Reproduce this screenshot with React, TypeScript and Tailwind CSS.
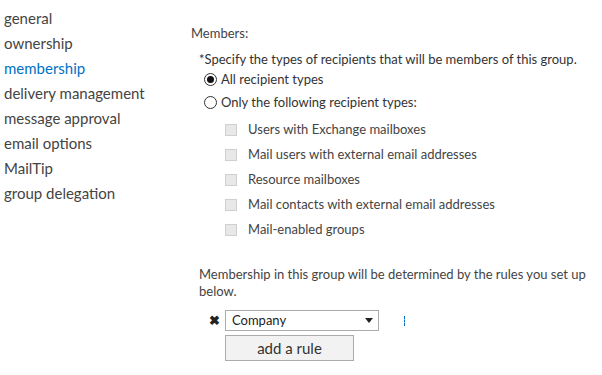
import React from 'react';

const navItems = [
  'general',
  'ownership',
  'membership',
  'delivery management',
  'message approval',
  'email options',
  'MailTip',
  'group delegation',
];

const recipientTypes = [
  'Users with Exchange mailboxes',
  'Mail users with external email addresses',
  'Resource mailboxes',
  'Mail contacts with external email addresses',
  'Mail-enabled groups',
];

const Radio = ({ checked }: { checked?: boolean }) => (
  <span className="w-[13px] h-[13px] rounded-full border border-[#333] bg-white flex items-center justify-center shrink-0">
    {checked && <span className="w-[7px] h-[7px] rounded-full bg-[#111]"></span>}
  </span>
);

export default function App() {
  return (
    <div className="w-[602px] h-[375px] bg-white overflow-hidden flex text-[#333]" style={{ fontFamily: 'Lato, "Open Sans", sans-serif' }}>
      <nav className="w-[191px] shrink-0 pl-[4px] pt-[6px] flex flex-col">
        {navItems.map(item => (
          <div
            key={item}
            className={`h-[25px] leading-[25px] text-[15px] ${item === 'membership' ? 'text-[#0072c6]' : 'text-[#444]'}`}
          >
            {item}
          </div>
        ))}
      </nav>

      <main className="flex-1 pt-[25px] pr-[6px] text-[13px]">
        <div className="text-[#444] leading-[17px]">Members:</div>

        <div className="pl-[8px] mt-[9px]">
          <div className="leading-[17px] text-[#333] whitespace-nowrap">*Specify the types of recipients that will be members of this group.</div>
          <div className="pl-[5px] flex flex-col">
            <label className="h-[23px] flex items-center gap-[4px]">
              <Radio checked />
              <span>All recipient types</span>
            </label>
            <label className="h-[23px] flex items-center gap-[4px]">
              <Radio />
              <span>Only the following recipient types:</span>
            </label>
          </div>

          <div className="pl-[26px] mt-[3px] flex flex-col">
            {recipientTypes.map(t => (
              <div key={t} className="h-[25px] flex items-center gap-[11px]">
                <span className="w-[12px] h-[12px] bg-[#e8e8e8] border border-[#cfcfcf] shrink-0"></span>
                <span className="text-[#444]">{t}</span>
              </div>
            ))}
          </div>

          <div className="mt-[24px] leading-[17px] text-[#444] w-[394px]">
            Membership in this group will be determined by the rules you set up below.
          </div>

          <div className="mt-[10px] flex items-center">
            <span className="w-[26px] pl-[10px] text-[13px] font-bold text-[#222]">✖</span>
            <div className="w-[154px] h-[21px] border border-[#ababab] bg-white flex items-center justify-between pl-[6px] pr-[5px]">
              <span className="text-[#222]">Company</span>
              <svg width="8" height="5" viewBox="0 0 8 5"><path d="M0 0h8L4 5z" fill="#222" /></svg>
            </div>
            <span className="ml-[25px] w-[1px] h-[10px] border-l border-dashed border-[#0072c6]"></span>
          </div>

          <div className="ml-[26px] mt-[4px] w-[129px] h-[26px] border border-[#ababab] bg-[#f2f2f2] flex items-center justify-center text-[15px] text-[#333]">
            add a rule
          </div>
        </div>
      </main>
    </div>
  );
}
